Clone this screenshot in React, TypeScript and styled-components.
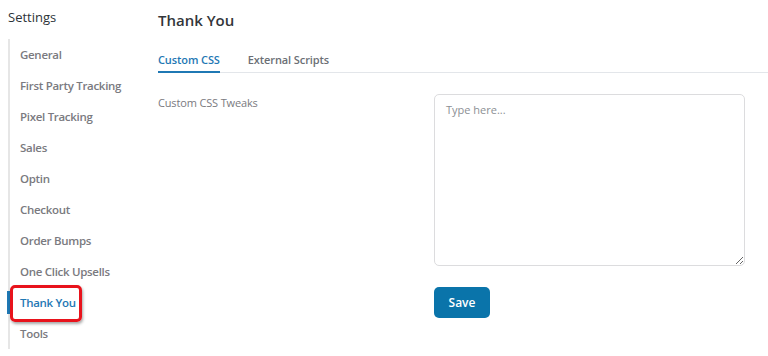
import React from "react";
import styled, { createGlobalStyle } from "styled-components";

const Global = createGlobalStyle`
  html, body { margin: 0; padding: 0; background: #fff; }
  body { font-family: "Open Sans", "Noto Sans", sans-serif; -webkit-font-smoothing: antialiased; }
  * { box-sizing: border-box; }
`;

const Page = styled.div`
  display: flex;
  width: 768px;
  height: 356px;
  overflow: hidden;
`;

const Sidebar = styled.aside`
  width: 150px;
  flex-shrink: 0;
  padding: 8px 0 0 8px;
`;

const SideTitle = styled.div`
  font-size: 13px;
  font-weight: 500;
  color: #2c3338;
  line-height: 18px;
`;

const NavList = styled.ul`
  list-style: none;
  margin: 13px 0 0 0;
  padding: 0;
  border-left: 2px solid #e6e6e6;
`;

const NavItem = styled.li<{ $active?: boolean }>`
  position: relative;
  height: 31px;
  display: flex;
  align-items: center;
  padding-left: 10px;
  font-size: 11.5px;
  font-weight: 600;
  letter-spacing: -0.3px;
  color: ${(p) => (p.$active ? "#1f78b4" : "#7a7a80")};
  ${(p) =>
    p.$active &&
    `
    &::before {
      content: "";
      position: absolute;
      left: -3px;
      top: 4px;
      width: 3px;
      height: 23px;
      background: #1f78b4;
    }
  `}
`;

const Highlight = styled.span`
  position: absolute;
  left: 0px;
  top: -2px;
  width: 72px;
  height: 37px;
  border: 3px solid #e8131c;
  border-radius: 5px;
  box-shadow: 1px 2px 3px rgba(0, 0, 0, 0.35);
  pointer-events: none;
`;

const Main = styled.main`
  flex: 1;
  padding: 10px 0 0 8px;
`;

const Heading = styled.h1`
  margin: 0;
  font-size: 15px;
  font-weight: 600;
  color: #33363a;
  line-height: 20px;
`;

const Tabs = styled.div`
  display: flex;
  gap: 28px;
  margin-top: 22px;
  border-bottom: 1px solid #e3e6ea;
`;

const Tab = styled.div<{ $active?: boolean }>`
  font-size: 11px;
  font-weight: 600;
  line-height: 16px;
  padding-bottom: 3px;
  letter-spacing: -0.1px;
  color: ${(p) => (p.$active ? "#1f78b4" : "#6b6f75")};
  border-bottom: 2px solid ${(p) => (p.$active ? "#1f78b4" : "transparent")};
  margin-bottom: -1px;
`;

const Row = styled.div`
  display: grid;
  grid-template-columns: 276px 311px;
  margin-top: 21px;
`;

const Label = styled.div`
  font-size: 11px;
  color: #7a7a80;
  line-height: 16px;
  letter-spacing: -0.15px;
  padding-top: 1px;
`;

const Field = styled.div`
  display: flex;
  flex-direction: column;
  gap: 21px;
`;

const TextArea = styled.textarea`
  width: 311px;
  height: 172px;
  border: 1px solid #dcdcde;
  border-radius: 5px;
  padding: 7px 11px;
  font-family: "Open Sans", sans-serif;
  font-size: 11px;
  color: #333;
  resize: vertical;
  outline: none;
  &::placeholder { color: #8c8f94; }
`;

const SaveButton = styled.button`
  width: 56px;
  height: 31px;
  border: none;
  border-radius: 5px;
  background: #0a74aa;
  color: #fff;
  font-family: "Open Sans", sans-serif;
  font-size: 12px;
  font-weight: 600;
  cursor: pointer;
`;

const items = [
  "General",
  "First Party Tracking",
  "Pixel Tracking",
  "Sales",
  "Optin",
  "Checkout",
  "Order Bumps",
  "One Click Upsells",
  "Thank You",
  "Tools",
];

export default function App() {
  return (
    <>
      <Global />
      <Page>
        <Sidebar>
          <SideTitle>Settings</SideTitle>
          <NavList>
            {items.map((it) => (
              <NavItem key={it} $active={it === "Thank You"}>
                {it}
                {it === "Thank You" && <Highlight />}
              </NavItem>
            ))}
          </NavList>
        </Sidebar>
        <Main>
          <Heading>Thank You</Heading>
          <Tabs>
            <Tab $active>Custom CSS</Tab>
            <Tab>External Scripts</Tab>
          </Tabs>
          <Row>
            <Label>Custom CSS Tweaks</Label>
            <Field>
              <TextArea placeholder="Type here..." />
              <SaveButton>Save</SaveButton>
            </Field>
          </Row>
        </Main>
      </Page>
    </>
  );
}
